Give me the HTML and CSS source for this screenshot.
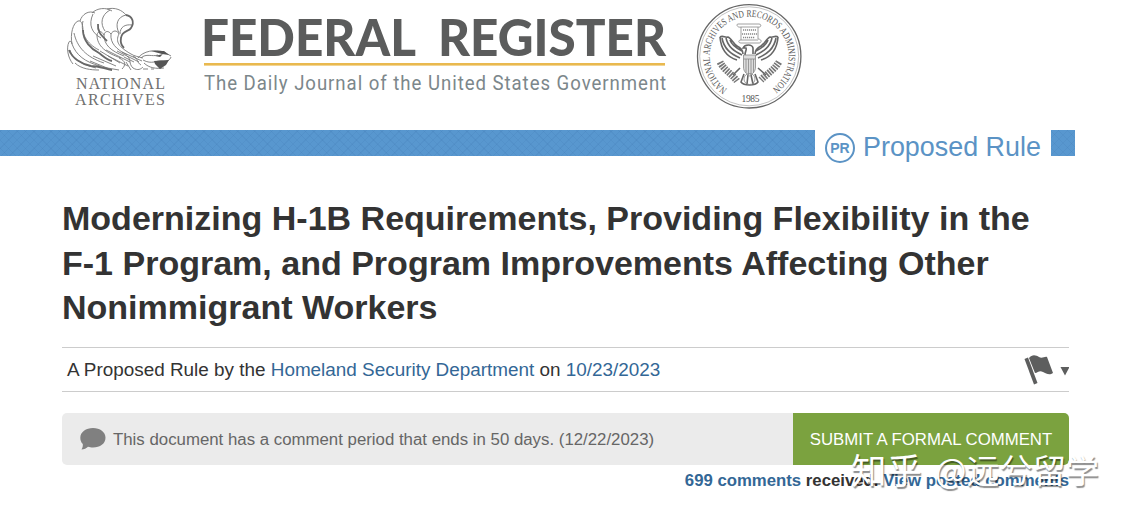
FILE: index.html
```html
<!DOCTYPE html>
<html lang="en">
<head>
  <meta charset="UTF-8">
  <meta name="viewport" content="width=device-width, initial-scale=1.0">
  <title>Federal Register :: Modernizing H-1B Requirements</title>
  <link rel="stylesheet" href="styles.css">
</head>
<body>
  <header class="site-header">
    <svg class="archives-logo" width="112" height="112" viewBox="60 0 112 112">
      <!-- eagle wing -->
      <g class="wing">
        <path d="M73 64C68 58 66 48 69 42C70 40 72 42 72 44M72 44C70 34 73 23 78 21C82 20 83 26 83 31M80 21C82 14 89 10 95 13M92 13C97 8 106 7 112 11M107 9C115 7 122 10 126 15"/>
        <path d="M70 50C72 58 80 64 96 68M72 44C76 55 85 62 100 66M74 33C77 47 86 57 104 63M83 21C80 33 87 44 99 50M93 14C88 25 92 33 101 38M110 10C101 15 100 24 105 31M126 15C117 17 115 25 119 33M132 25C125 24 120 27 120 34M75 63C81 69 91 70 99 70"/>
        <path d="M97 35C98 30 102 31 104 35C105 30 109 31 111 34C113 30 117 30 119 34M97 35C97 46 106 53 121 58M104 35C104 45 111 51 124 56M111 34C110 43 116 49 127 55M119 34C115 42 119 47 131 54C134 56 139 57 143 58"/>
        <path d="M100 51L120 63M93 56L116 66M90 61L112 70M106 50L130 62M108 56L128 66M117 51L139 62M122 52L142 61M96 66L119 70M124 57L134 62M119 58C126 61 126 65 122 69M127 56C132 60 128 63 133 68C138 71 141 69 143 67M133 56C139 59 136 62 141 65M126 62L131 70"/>
        <path class="wing-thick" d="M126 15C132 16 135 22 131 28C129 32 122 30 121 38C120 43 122 46 124 48M69 50C72 58 81 64 91 66M83 30C83 41 91 49 99 53C103 56 107 60 112 61M98 24C97 32 102 36 107 41M91 66C99 66 105 69 112 70"/>
        <path d="M138 58C143 51 155 49 164 52L171 56M141 58C146 53 152 57 158 55M143 60C152 65 157 60 162 61C167 62 170 60 171 57M144 63C149 68 156 69 164 68M143 69H148M151 69H154"/>
        <path class="beak" d="M154 61L169 60L166 65L160 69L155 64ZM151 51L164 51L169 55L162 54ZM155 56L163 54L160 57Z"/>
      </g>
      <g class="archives-name">
        <text x="76" y="88.500" textLength="89">NATIONAL</text>
        <text x="75" y="105" textLength="90">ARCHIVES</text>
      </g>
    </svg>

    <svg class="register-logo" width="470" height="112" viewBox="200 0 470 112">
      <g class="register-name">
        <text x="201" y="56" textLength="215" lengthAdjust="spacingAndGlyphs">FEDERAL</text>
        <text x="438" y="56" textLength="228" lengthAdjust="spacingAndGlyphs">REGISTER</text>
      </g>
      <rect class="register-rule" x="204" y="63" width="461" height="2.6"/>
      <text class="register-tagline" transform="translate(204 89.500) scale(0.93 1)" x="0" y="0" textLength="497">The Daily Journal of the United States Government</text>
    </svg>

    <svg class="seal" width="110" height="112" viewBox="694 0 110 112">
      <defs>
        <path id="seal-top" d="M727.3 89.200A39.500 39.500 0 1 1 771.1 89.200"/>
      </defs>
      <circle class="seal-ring" cx="749.2" cy="56.3" r="51.7"/>
      <circle class="seal-ring-inner" cx="749.2" cy="56.3" r="49.5"/>
      <text class="seal-text"><textPath href="#seal-top" textLength="200" lengthAdjust="spacingAndGlyphs">NATIONAL ARCHIVES AND RECORDS ADMINISTRATION</textPath></text>
      <text class="seal-year" x="741.5" y="102" textLength="18">1985</text>
      <!-- scroll -->
      <path class="seal-line" d="M738 24H759C762 24 761 28 758 27V39C762 39 762 43 759 43H741C738 43 738 40 741 40V27C737 28 736 24 738 24ZM741 27H758M741 40H758"/>
      <path class="seal-script" d="M743 30H756M742 34H757M743 37.5H755"/>
      <!-- eagle -->
      <g class="seal-eagle">
        <path d="M720 37C721 50 727 57 737 60M722 38C724 49 731 54 740 58M726 38C728 47 734 51 742 55M730 40C732 46 738 49 742 51M720 37C723 35 725 38 728 37C731 38 733 43 737 46C741 48 743 50 743 54"/>
        <path d="M778 37C777 50 771 57 761 60M776 38C774 49 767 54 758 58M772 38C770 47 764 51 756 55M768 40C766 46 760 49 756 51M778 37C775 35 773 38 770 37C767 38 765 43 761 46C757 48 755 50 755 54"/>
        <path d="M745 55C745 51 747 50 746 48L743 48C745 44 752 44 753 48V54M740 68L733 75M758 68L766 75M744 74L741 82C744 86 755 86 758 82L755 74M748 75L747 84M751 75L753 84"/>
      </g>
      <path class="seal-line shield" d="M743.5 55H755.5V67C755.5 72 752 74 749.5 76C747 74 743.5 72 743.5 67Z"/>
      <path class="seal-line" d="M743.5 59H755.5M746 59V73M748.5 59V75M751 59V75M753.5 59V73"/>
      <path class="seal-branch" d="M720 62C724 70 731 73 737 81M779 62C774 70 768 73 761 80"/>
      <circle class="seal-line" cx="749.5" cy="79" r="5.5"/>
    </svg>
  </header>

  <div class="doc-type-bar">
    <div class="stripe stripe-left"></div>
    <div class="doc-type">
      <span class="doc-type-icon">PR</span>
      <span class="doc-type-label">Proposed Rule</span>
    </div>
    <div class="stripe stripe-right"></div>
  </div>

  <main class="document">
    <h1>Modernizing H-1B Requirements, Providing Flexibility in the F-1 Program, and Program Improvements Affecting Other Nonimmigrant Workers</h1>

    <div class="metadata">
      <p>A Proposed Rule by the <a href="#">Homeland Security Department</a> on <a href="#">10/23/2023</a></p>
      <div class="flag-menu">
        <svg width="46" height="32" viewBox="0 0 46 32">
          <path d="M1.500 6L5 4.500L14.500 30L11 31.500Z"/>
          <path d="M6 5C9 1 13 2 16 4C19 6 22 3 24 4L30 20C26 23 23 20 20 19C16 17 15 20 12 20Z"/>
          <path d="M37.500 14H46.500L42 22.500Z"/>
        </svg>
      </div>
    </div>

    <div class="comment-bar">
      <div class="comment-period">
        <svg width="26" height="22" viewBox="0 0 26 22">
          <path d="M13 0C20 0 25.500 4 25.500 9.700C25.500 15.500 20 19.500 13 19.500C11 19.500 9.500 19.200 8 18.700C6.500 20 4 21.500 1.500 21.500C2.500 20 3 18 2.800 16C1 14.300 .3 12 .3 9.700C.3 4 6 0 13 0Z"/>
        </svg>
        <span>This document has a comment period that ends in 50 days. (12/22/2023)</span>
      </div>
      <a class="submit-comment" href="#">SUBMIT A FORMAL COMMENT</a>
    </div>

    <p class="comment-count"><a href="#">699 comments</a> received. <a href="#">View posted comments</a></p>
  </main>

  <div class="watermark"><span class="watermark-site">知乎</span><span>@</span><span>远兮留学</span></div>
</body>
</html>
```
FILE: styles.css
```css
body {
  margin: 0;
  background: #fff;
  color: #333;
  font-family: "Liberation Sans", Arial, sans-serif;
  position: relative;
  height: 517px;
  overflow: hidden;
}

a {
  color: #336796;
  text-decoration: none;
}

.site-header {
  display: flex;
  height: 130px;
  padding-left: 60px;
}

.register-logo {
  margin-left: 28px;
  overflow: visible;
}

.seal {
  margin-left: 24px;
}

.wing {
  fill: none;
  stroke: #777;
  stroke-width: 0.9;
}

.wing .wing-thick {
  stroke: #686868;
  stroke-width: 1.8;
}

.wing .beak {
  fill: #555;
  stroke: none;
}

.archives-name {
  font-family: "Liberation Serif", serif;
  font-size: 16px;
  fill: #707070;
}

.register-name {
  font-family: "Lato", sans-serif;
  font-size: 51.500px;
  font-weight: 900;
  fill: #5b5c5c;
}

.register-rule {
  fill: #e9b94f;
}

.register-tagline {
  font-family: "Roboto", sans-serif;
  font-size: 20px;
  fill: #7c878b;
}

.seal-ring {
  fill: none;
  stroke: #666;
  stroke-width: 1.3;
}

.seal-ring-inner {
  fill: none;
  stroke: #999;
  stroke-width: 0.6;
}

.seal-text,
.seal-year {
  font-family: "Liberation Serif", serif;
  font-size: 9.500px;
  fill: #555;
}

.seal-text {
  font-size: 10px;
}

.seal-line {
  fill: none;
  stroke: #888;
  stroke-width: 0.8;
}

.seal-script {
  stroke: #888;
  stroke-width: 1.5;
  stroke-dasharray: 1.200 0.8;
}

.seal-eagle {
  fill: none;
  stroke: #666;
  stroke-width: 1.6;
}

.shield {
  fill: #ddd;
}

.seal-branch {
  fill: none;
  stroke: #777;
  stroke-width: 7;
  stroke-dasharray: 1.700 1;
}

/* document type bar */
.doc-type-bar {
  display: flex;
  width: 1075px;
  height: 26px;
}

.stripe {
  background-color: #5897cf;
  background-image:
    repeating-linear-gradient(45deg, transparent 0 5px, rgba(40, 90, 150, 0.09) 5px 6px),
    repeating-linear-gradient(-45deg, transparent 0 5px, rgba(40, 90, 150, 0.09) 5px 6px);
}

.stripe-left {
  width: 815px;
}

.stripe-right {
  width: 24px;
}

.doc-type {
  display: flex;
  width: 236px;
  height: 34px;
  align-items: center;
  color: #5b93c5;
}

.doc-type-icon {
  box-sizing: border-box;
  width: 30px;
  height: 30px;
  margin: 2px 8px 0 10px;
  border: 2.500px solid #5b93c5;
  border-radius: 50%;
  font-size: 14px;
  font-weight: bold;
  line-height: 26px;
  text-align: center;
}

.doc-type-label {
  font-size: 26.900px;
  white-space: nowrap;
}

.document {
  width: 1007px;
  margin-left: 62px;
}

h1 {
  margin: 0;
  padding-top: 40px;
  font-size: 34.030px;
  line-height: 44.500px;
}

.metadata {
  display: flex;
  justify-content: space-between;
  align-items: center;
  box-sizing: border-box;
  height: 45px;
  margin-top: 17px;
  padding-left: 5px;
  border-top: 1px solid #ccc;
  border-bottom: 1px solid #ccc;
  font-size: 18.900px;
}

.metadata p {
  margin: 0;
  padding-top: 1px;
}

.flag-menu svg {
  display: block;
  fill: #5d5e5e;
}

.comment-bar {
  display: flex;
  height: 52px;
  margin-top: 21px;
  border-radius: 5px;
  overflow: hidden;
}

.comment-period {
  display: flex;
  flex: 1;
  align-items: center;
  padding-left: 18px;
  background: #ebebeb;
  color: #666;
  font-size: 16.820px;
}

.comment-period span {
  padding-top: 2px;
}

.comment-period svg {
  margin-right: 7px;
  fill: #808080;
}

.submit-comment {
  width: 276px;
  background: #7ba23f;
  color: #fff;
  font-size: 16.800px;
  line-height: 53px;
  text-align: center;
}

.comment-count {
  margin: 6px 0 0;
  font-size: 16.760px;
  font-weight: bold;
  line-height: 19px;
  text-align: right;
}

/* watermark lies over the comment links */
.watermark {
  position: absolute;
  left: 851px;
  top: 445px;
  display: flex;
  color: #fff;
  font-family: "Noto Sans CJK SC", sans-serif;
  font-size: 33.200px;
  line-height: 48px;
  text-shadow: 1px 2px 1px rgba(0, 0, 0, 0.45);
  white-space: nowrap;
}

.watermark-site {
  margin-right: 13px;
  font-size: 35.500px;
}
```
